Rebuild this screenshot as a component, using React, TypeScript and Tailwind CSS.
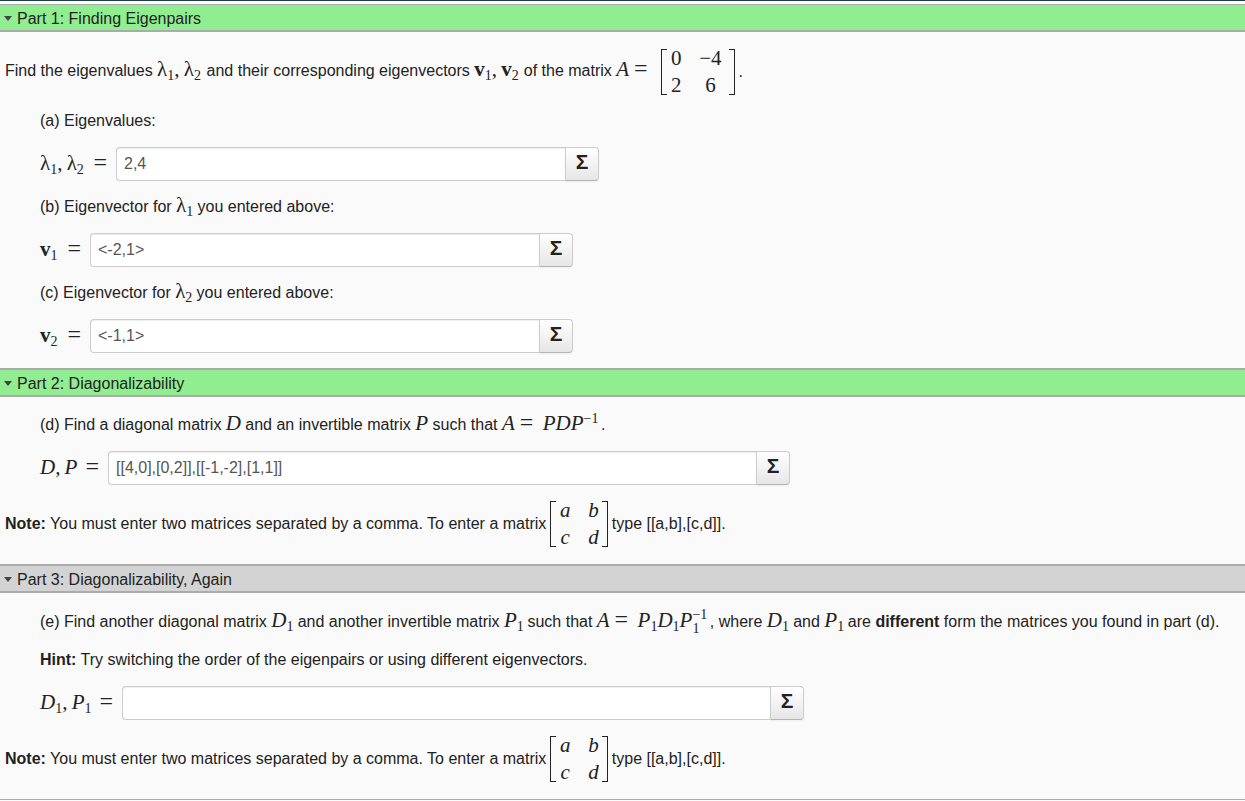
import React, { useState } from 'react';

const MATH_FONT = "font-['Liberation_Serif',serif] text-[21px]";

const Formula = ({ className = '', children }: { className?: string; children: React.ReactNode }) => (
  <span className={`${MATH_FONT} inline-block leading-4 whitespace-nowrap ${className}`}>{children}</span>
);

const Sub = ({ children }: { children: React.ReactNode }) => (
  <sub className="text-[14px] font-normal not-italic">{children}</sub>
);

const Equals = () => <span className="text-[24px] leading-[0px] not-italic">=</span>;

const Matrix = ({ rows, gridClass }: { rows: string[][]; gridClass: string }) => (
  <span className={`${MATH_FONT} inline-flex h-[46px] items-stretch`}>
    <span className="w-[6px] border-y border-l border-[#222]" />
    <span
      className={`grid grid-cols-[18px_auto] content-center justify-items-center gap-x-[14px] gap-y-[9px] pb-[2px] leading-[18px] ${gridClass}`}
    >
      {rows.flat().map((cell, i) => (
        <span key={i}>{cell}</span>
      ))}
    </span>
    <span className="w-[6px] border-y border-r border-[#222]" />
  </span>
);

interface AnswerProps {
  id: string;
  label: React.ReactNode;
  labelClass: string;
  initial?: string;
  wide?: boolean;
}

const Answer = ({ id, label, labelClass, initial = '', wide = false }: AnswerProps) => {
  const [value, setValue] = useState(initial);
  return (
    <div className="flex h-[34px] pl-10">
      <label
        htmlFor={id}
        className={`${MATH_FONT} flex shrink-0 items-baseline justify-between pt-[2px] pr-[9px] leading-7 whitespace-nowrap ${labelClass}`}
      >
        <span>{label}</span>
        <Equals />
      </label>
      <input
        id={id}
        type="text"
        value={value}
        onChange={(e) => setValue(e.target.value)}
        className={`min-w-0 rounded-l-[4px] border border-r-0 border-[#ccc] bg-white px-[7px] text-base text-[#555] shadow-[inset_0_1px_1px_rgba(0,0,0,0.075)] outline-none ${
          wide ? 'w-[648px]' : 'w-[449px]'
        }`}
      />
      <button
        type="button"
        aria-label="Open equation editor"
        className="flex w-[34px] shrink-0 justify-center rounded-r-[4px] border border-[#ccc] border-b-[#b3b3b3] bg-linear-to-b from-white to-[#e6e6e6] pt-[2px] text-[21px] leading-6 font-bold text-[#222] shadow-[0_1px_2px_rgba(0,0,0,0.05)]"
      >
        Σ
      </button>
    </div>
  );
};

const Part = ({ title, headClass, children }: { title: string; headClass: string; children: React.ReactNode }) => (
  <details open>
    <summary
      className={`flex cursor-pointer list-none items-center gap-[5px] border-b-2 border-[#aaa] pt-[2px] pl-1 leading-[23px] ${headClass}`}
    >
      <svg width="8" height="5" viewBox="0 0 8 5" fill="#444">
        <path d="M0 0h8L4 5z" />
      </svg>
      {title}
    </summary>
    {children}
  </details>
);

const MatrixNote = () => (
  <div className="mt-4 mb-[17px] flex items-center gap-1 pl-[5px]">
    <p>
      <b>Note:</b> You must enter two matrices separated by a comma. To enter a matrix
    </p>
    <Matrix rows={[['a', 'b'], ['c', 'd']]} gridClass="pr-[3px] italic" />
    <span>type [[a,b],[c,d]].</span>
  </div>
);

export default function App() {
  return (
    <main className="min-h-screen bg-[#fafafa] font-['Liberation_Sans',Arial,sans-serif] text-base leading-6 text-[#222]">
      <div className="h-1 border-t border-[#1d4040] bg-white" />

      <Part title="Part 1: Finding Eigenpairs" headClass="border-t bg-[#90ee90]">
        <div className="mt-[17px] flex items-center pl-[5px]">
          <p className="pb-[2px]">
            Find the eigenvalues{' '}
            <Formula className="w-[45px]">λ<Sub>1</Sub>,&thinsp;λ<Sub>2</Sub></Formula>
            {' '}and their corresponding eigenvectors{' '}
            <Formula className="w-[45px]"><b>v</b><Sub>1</Sub>,&thinsp;<b>v</b><Sub>2</Sub></Formula>
            {' '}of the matrix{' '}
            <Formula className="w-[45px] italic">A <Equals /></Formula>
          </p>
          <Matrix rows={[['0', '−4'], ['2', '6']]} gridClass="pr-[7px]" />
          <span className="pl-1">.</span>
        </div>
        <p className="my-[14px] pl-10">(a) Eigenvalues:</p>
        <Answer id="eigenvalues" label={<>λ<Sub>1</Sub>,&thinsp;λ<Sub>2</Sub></>} labelClass="w-[76px]" initial="2,4" />
        <p className="my-[14px] pl-10">
          (b) Eigenvector for <Formula className="w-[17px]">λ<Sub>1</Sub></Formula> you entered above:
        </p>
        <Answer id="v1" label={<><b>v</b><Sub>1</Sub></>} labelClass="w-[50px]" initial="<-2,1>" />
        <p className="my-[14px] pl-10">
          (c) Eigenvector for <Formula className="w-[17px]">λ<Sub>2</Sub></Formula> you entered above:
        </p>
        <Answer id="v2" label={<><b>v</b><Sub>2</Sub></>} labelClass="w-[50px]" initial="<-1,1>" />
      </Part>

      <div className="h-[15px]" />

      <Part title="Part 2: Diagonalizability" headClass="border-t-2 bg-[#90ee90]">
        <p className="mt-4 mb-[14px] pl-10">
          (d) Find a diagonal matrix <Formula className="w-[15px] italic">D</Formula> and an invertible matrix{' '}
          <Formula className="w-[13px] italic">P</Formula> such that{' '}
          <Formula className="w-[99px] italic">
            A <Equals />&nbsp;&thinsp;PDP<sup className="text-[14px] not-italic">−1</sup>
          </Formula>
          .
        </p>
        <Answer
          id="diagonalization"
          label={<i>D,&thinsp;P</i>}
          labelClass="w-[68px]"
          initial="[[4,0],[0,2]],[[-1,-2],[1,1]]"
          wide
        />
        <MatrixNote />
      </Part>

      <Part title="Part 3: Diagonalizability, Again" headClass="border-t-2 bg-[#d3d3d3]">
        <p className="mt-[17px] mb-[14px] pl-10">
          (e) Find another diagonal matrix <Formula className="w-[22px] italic">D<Sub>1</Sub></Formula> and another
          invertible matrix <Formula className="w-[19px] italic">P<Sub>1</Sub></Formula> such that{' '}
          <Formula className="w-[113px] italic">
            A <Equals />&nbsp;&thinsp;P<Sub>1</Sub>D<Sub>1</Sub>P
            <span className="-my-2 inline-flex flex-col align-middle text-[14px] leading-[14px] not-italic">
              <span>−1</span>
              <span>1</span>
            </span>
          </Formula>
          , where <Formula className="w-[22px] italic">D<Sub>1</Sub></Formula> and{' '}
          <Formula className="w-[19px] italic">P<Sub>1</Sub></Formula> are <b>different</b> form the matrices you found in
          part (d).
        </p>
        <p className="mb-[14px] pl-10">
          <b>Hint:</b> Try switching the order of the eigenpairs or using different eigenvectors.
        </p>
        <Answer
          id="other-diagonalization"
          label={<i>D<Sub>1</Sub>,&thinsp;P<Sub>1</Sub></i>}
          labelClass="w-[82px]"
          wide
        />
        <MatrixNote />
      </Part>
      <hr className="border-[#aaa]" />
    </main>
  );
}
